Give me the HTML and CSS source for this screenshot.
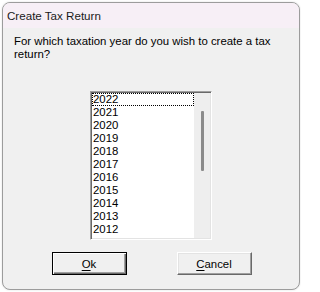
FILE: index.html
```html
<!DOCTYPE html>
<html>
<head>
<meta charset="utf-8">
<link rel="stylesheet" href="styles.css">
</head>
<body>
<div class="window">
  <div class="titlebar">Create Tax Return</div>
  <div class="content">
    <p class="question">For which taxation year do you wish to create a tax return?</p>
    <div class="listbox">
      <ul class="items">
        <li class="item focus">2022</li>
        <li class="item">2021</li>
        <li class="item">2020</li>
        <li class="item">2019</li>
        <li class="item">2018</li>
        <li class="item">2017</li>
        <li class="item">2016</li>
        <li class="item">2015</li>
        <li class="item">2014</li>
        <li class="item">2013</li>
        <li class="item">2012</li>
      </ul>
      <div class="scrollbar"><div class="thumb"></div></div>
    </div>
    <div class="buttons">
      <button class="btn default"><span class="btn-inner"><u>O</u>k</span></button>
      <button class="btn"><span class="btn-inner"><u>C</u>ancel</span></button>
    </div>
  </div>
</div>
</body>
</html>
```
FILE: styles.css
```css
html, body {
  margin: 0;
  padding: 0;
  background: #ffffff;
}
body {
  width: 301px;
  height: 292px;
  overflow: hidden;
  font-family: "Liberation Sans", Arial, sans-serif;
}
.window {
  box-sizing: border-box;
  margin: 2px 0 0 2px;
  width: 298px;
  height: 288px;
  border: 1px solid #9c9c9c;
  border-radius: 8px;
  background: #f0f0f0;
  overflow: hidden;
  display: flex;
  flex-direction: column;
  box-shadow: 0 0 2px rgba(0,0,0,0.15);
}
.titlebar {
  height: 25px;
  background: #f7eff6;
  font-size: 11.6px;
  line-height: 25px;
  padding-left: 4px;
  color: #1a1a1a;
  flex: none;
}
.content {
  display: flex;
  flex-direction: column;
  padding: 7px 11px 0 11px;
}
.question {
  margin: 0;
  font-size: 11.4px;
  line-height: 13px;
  color: #000;
  width: 270px;
}
.listbox {
  align-self: center;
  margin-top: 30px;
  box-sizing: border-box;
  width: 122px;
  height: 149px;
  background: #fff;
  border-top: 1px solid #a0a0a0;
  border-left: 1px solid #a0a0a0;
  border-right: 1px solid #ffffff;
  border-bottom: 1px solid #ffffff;
  box-shadow: inset 1px 1px 0 #696969, inset -1px -1px 0 #e3e3e3;
  display: flex;
  padding: 1px;
}
.items {
  list-style: none;
  margin: 0;
  padding: 0;
  flex: 1;
}
.item {
  font-size: 11.4px;
  line-height: 13px;
  height: 13px;
  padding-left: 1px;
  color: #000;
  box-sizing: border-box;
}
.item.focus {
  outline: 1px dotted #000;
  outline-offset: -1px;
}
.scrollbar {
  width: 16px;
  background: #eeeeee;
  display: flex;
  justify-content: center;
  padding-top: 18px;
  flex: none;
}
.thumb {
  width: 3px;
  height: 60px;
  background: #8b8b8b;
  border-radius: 1px;
}
.buttons {
  display: flex;
  justify-content: center;
  gap: 50px;
  margin-top: 12px;
  padding-left: 1px;
}
.btn {
  box-sizing: border-box;
  width: 75px;
  height: 23px;
  padding: 0;
  margin: 0;
  background: #f0f0f0;
  border: 1px solid;
  border-color: #ffffff #696969 #696969 #ffffff;
  box-shadow: inset -1px -1px 0 #a0a0a0, inset 1px 1px 0 #e3e3e3;
  font-family: "Liberation Sans", Arial, sans-serif;
  font-size: 11.4px;
  color: #000;
  display: flex;
  align-items: center;
  justify-content: center;
}
.btn.default {
  border: 1px solid #000;
  box-shadow: inset 1px 1px 0 #ffffff, inset -1px -1px 0 #696969, inset -2px -2px 0 #a0a0a0;
}
.btn-inner u {
  text-decoration-thickness: 1px;
  text-underline-offset: 2px;
}
```
